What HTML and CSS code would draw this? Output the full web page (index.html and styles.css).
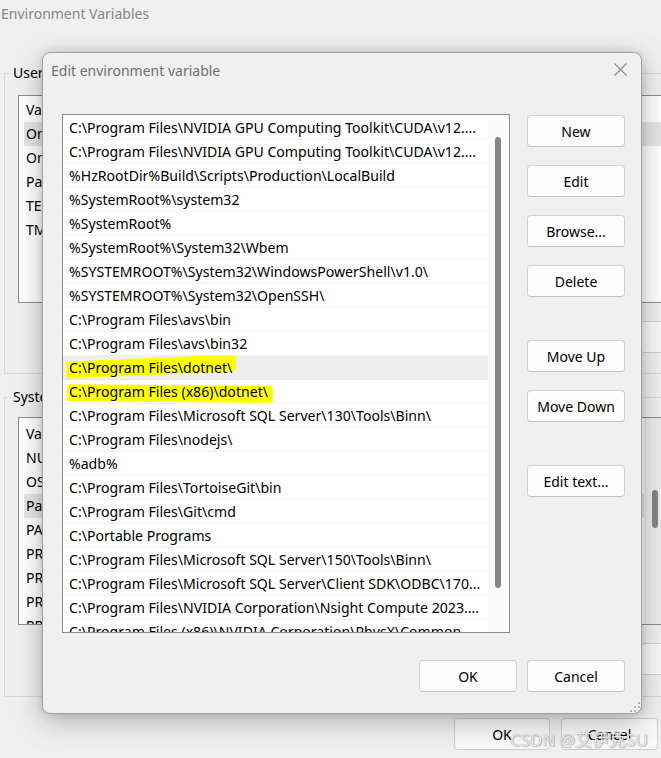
FILE: index.html
```html
<!DOCTYPE html>
<html lang="en">
<head>
<meta charset="utf-8">
<title>Edit environment variable</title>
<link rel="stylesheet" href="styles.css">
</head>
<body>
<div class="envwin">
  <div class="env-title">Environment Variables</div>
  <fieldset class="group group-user">
    <legend>User variables for user</legend>
    <div class="varlist varlist-user">
      <div class="vrow">Variable</div>
      <div class="vrow vsel">OneDrive</div>
      <div class="vrow">OneDriveConsumer</div>
      <div class="vrow">Path</div>
      <div class="vrow">TEMP</div>
      <div class="vrow">TMP</div>
    </div>
    <div class="group-buttons">
      <button class="btn-bg">New...</button>
      <button class="btn-bg">Edit...</button>
      <button class="btn-bg">Delete</button>
    </div>
  </fieldset>
  <fieldset class="group group-sys">
    <legend>System variables</legend>
    <div class="varlist varlist-sys">
      <div class="vrows">
        <div class="vrow">Variable</div>
        <div class="vrow">NUMBER_OF_PROCESSORS</div>
        <div class="vrow">OS</div>
        <div class="vrow vsel">Path</div>
        <div class="vrow">PATHEXT</div>
        <div class="vrow">PROCESSOR_ARCHITECTURE</div>
        <div class="vrow">PROCESSOR_IDENTIFIER</div>
        <div class="vrow">PROCESSOR_LEVEL</div>
        <div class="vrow">PROCESSOR_REVISION</div>
      </div>
      <div class="vscroll"><div class="vthumb"></div></div>
    </div>
    <div class="group-buttons">
      <button class="btn-bg">New...</button>
      <button class="btn-bg">Edit...</button>
      <button class="btn-bg">Delete</button>
    </div>
  </fieldset>
  <div class="env-footer">
    <button class="btn-bg btn-ok">OK</button>
    <button class="btn-bg btn-cancel">Cancel</button>
  </div>
</div>

<div class="dialog">
  <div class="dlg-titlebar">
    <div class="dlg-title">Edit environment variable</div>
    <div class="dlg-close">
      <svg width="13" height="13" viewBox="0 0 13 13"><path d="M0.5 0.5L12.5 12.5M12.5 0.5L0.5 12.5" stroke="#8a8a8a" stroke-width="1.1" fill="none"/></svg>
    </div>
  </div>
  <div class="dlg-body">
    <div class="pathlist">
      <div class="prows">
        <div class="prow">C:\Program Files\NVIDIA GPU Computing Toolkit\CUDA\v12....</div>
        <div class="prow">C:\Program Files\NVIDIA GPU Computing Toolkit\CUDA\v12....</div>
        <div class="prow">%HzRootDir%Build\Scripts\Production\LocalBuild</div>
        <div class="prow">%SystemRoot%\system32</div>
        <div class="prow">%SystemRoot%</div>
        <div class="prow">%SystemRoot%\System32\Wbem</div>
        <div class="prow">%SYSTEMROOT%\System32\WindowsPowerShell\v1.0\</div>
        <div class="prow">%SYSTEMROOT%\System32\OpenSSH\</div>
        <div class="prow">C:\Program Files\avs\bin</div>
        <div class="prow">C:\Program Files\avs\bin32</div>
        <div class="prow prow-sel"><span class="hl hl-a">C:\Program Files\dotnet\</span></div>
        <div class="prow"><span class="hl hl-b">C:\Program Files (x86)\dotnet\</span></div>
        <div class="prow">C:\Program Files\Microsoft SQL Server\130\Tools\Binn\</div>
        <div class="prow">C:\Program Files\nodejs\</div>
        <div class="prow">%adb%</div>
        <div class="prow">C:\Program Files\TortoiseGit\bin</div>
        <div class="prow">C:\Program Files\Git\cmd</div>
        <div class="prow">C:\Portable Programs</div>
        <div class="prow">C:\Program Files\Microsoft SQL Server\150\Tools\Binn\</div>
        <div class="prow">C:\Program Files\Microsoft SQL Server\Client SDK\ODBC\170...</div>
        <div class="prow">C:\Program Files\NVIDIA Corporation\Nsight Compute 2023....</div>
        <div class="prow">C:\Program Files (x86)\NVIDIA Corporation\PhysX\Common</div>
      </div>
      <div class="pscroll"><div class="pthumb"></div></div>
    </div>
    <div class="dlg-buttons">
      <div class="btn-group">
        <button class="btn">New</button>
        <button class="btn">Edit</button>
        <button class="btn">Browse...</button>
        <button class="btn">Delete</button>
      </div>
      <div class="btn-group">
        <button class="btn">Move Up</button>
        <button class="btn">Move Down</button>
      </div>
      <div class="btn-group">
        <button class="btn">Edit text...</button>
      </div>
    </div>
  </div>
  <div class="dlg-footer">
    <button class="btn">OK</button>
    <button class="btn">Cancel</button>
  </div>
  <svg class="grip" width="10" height="10" viewBox="0 0 10 10">
    <rect x="8" y="0" width="2" height="2" fill="#b4b4b4"/>
    <rect x="4" y="4" width="2" height="2" fill="#b4b4b4"/>
    <rect x="8" y="4" width="2" height="2" fill="#b4b4b4"/>
    <rect x="0" y="8" width="2" height="2" fill="#b4b4b4"/>
    <rect x="4" y="8" width="2" height="2" fill="#b4b4b4"/>
    <rect x="8" y="8" width="2" height="2" fill="#b4b4b4"/>
  </svg>
</div>

<div class="watermark">CSDN @艾伊克SU</div>
</body>
</html>
```

FILE: styles.css
```css
* { box-sizing: border-box; }
html, body { margin: 0; padding: 0; }
body {
  width: 661px;
  height: 758px;
  overflow: hidden;
  position: relative;
  background: #f0f0f0;
  font-family: "Noto Sans", "Open Sans", sans-serif;
  font-size: 14px;
  color: #000;
}

/* background window */
.envwin { width: 760px; }
.env-title {
  height: 24px;
  line-height: 20px;
  padding: 4px 0 0 1px;
  color: #858585;
}
.group {
  width: 756px;
  margin: 0 0 0 4px;
  border: 1px solid #d9d9d9;
  padding: 0 0 20px 13px;
  min-width: 0;
}
.group legend {
  padding: 0 2px;
  margin-left: -7px;
  line-height: 20px;
}
.group-user { margin-top: 39px; padding-top: 12px; }
.group-sys { margin-top: 13px; padding-top: 10px; padding-bottom: 21px; }
.varlist {
  height: 208px;
  border: 1px solid #8c8f95;
  background: #fff;
  overflow: hidden;
}
.varlist-user { padding: 2px 0 0 5px; }
.varlist-sys { width: 644px; display: flex; }
.vrows { flex: 1; padding: 4px 0 0 5px; overflow: hidden; }
.vscroll { width: 17px; background: #ececec; }
.vthumb {
  margin: 72px 0 0 8px;
  width: 6px;
  height: 38px;
  border-radius: 3px;
  background: #858585;
}
.vrow {
  height: 24px;
  line-height: 24px;
  padding-left: 2px;
  white-space: nowrap;
}
.vsel { background: #e5e5e5; }
.group-buttons {
  display: flex;
  gap: 10px;
  margin-top: 18px;
  padding-left: 410px;
}
.btn-bg {
  font: inherit;
  color: #000;
  width: 96px;
  height: 32px;
  padding: 0;
  border: 1px solid #cfcfcf;
  border-radius: 4px;
  background: #f9f9f9;
}
.env-footer {
  width: 661px;
  display: flex;
  justify-content: flex-end;
  gap: 11px;
  margin-top: 21px;
  padding-right: 3px;
}
.env-footer .btn-cancel { width: 97px; }

/* dialog */
.dialog {
  position: absolute;
  left: 42px;
  top: 52px;
  width: 600px;
  height: 662px;
  background: #f0f0f0;
  border: 1px solid #a3a3a3;
  border-radius: 8px;
  box-shadow: 0 8px 28px rgba(0, 0, 0, 0.26), 0 0 10px rgba(0, 0, 0, 0.12);
  display: flex;
  flex-direction: column;
}
.dlg-titlebar {
  height: 36px;
  display: flex;
  align-items: center;
  justify-content: space-between;
  padding-left: 8px;
}
.dlg-title { color: #6f6f6f; line-height: 20px; }
.dlg-close {
  width: 42px;
  height: 36px;
  display: flex;
  align-items: center;
  justify-content: center;
  padding-bottom: 3px;
}
.dlg-close svg { display: block; }
.dlg-body {
  display: flex;
  padding-left: 19px;
  margin-top: 25px;
}
.pathlist {
  width: 448px;
  height: 519px;
  border: 1px solid #8c8f95;
  background: #fff;
  display: flex;
  overflow: hidden;
}
.prows { width: 425px; padding-top: 1px; overflow: hidden; }
.prow {
  position: relative;
  z-index: 0;
  height: 24px;
  line-height: 24px;
  border-bottom: 1px solid #efefef;
  padding-left: 6px;
  font-size: 14.1px;
  white-space: nowrap;
  overflow: hidden;
}
.prow-sel { background: #efefef; border-bottom-color: #e8e8e8; }
.hl { position: relative; }
.hl::before {
  content: "";
  position: absolute;
  z-index: -1;
  background: #ffff00;
  border-radius: 3px;
}
.hl-a::before { left: -3px; right: -4px; top: 0; bottom: 2px; transform: rotate(-2.5deg); }
.hl-b::before { left: -2px; right: -5px; top: 3px; bottom: -1px; transform: rotate(0.5deg); }
.pscroll { flex: 1; background: #fbfbfb; }
.pthumb {
  margin: 22px 0 0 7px;
  width: 6px;
  height: 451px;
  border-radius: 3px;
  background: #868686;
}
.dlg-buttons {
  display: flex;
  flex-direction: column;
  gap: 43px;
  margin-left: 17px;
  padding-top: 1px;
}
.btn-group { display: flex; flex-direction: column; gap: 18px; }
.btn {
  font: inherit;
  color: #000;
  width: 98px;
  height: 32px;
  padding: 0;
  border: 1px solid #d2d2d2;
  border-bottom-color: #c2c2c2;
  border-radius: 4px;
  background: #fdfdfd;
}
.dlg-footer {
  display: flex;
  justify-content: flex-end;
  gap: 10px;
  padding-right: 16px;
  margin-top: 27px;
}
.grip { position: absolute; right: 1px; bottom: 1px; }

.watermark {
  position: absolute;
  left: 510px;
  top: 728px;
  white-space: nowrap;
  font-family: "Noto Sans", "Noto Sans CJK SC", sans-serif;
  font-size: 17px;
  line-height: 24px;
  color: rgba(255, 255, 255, 0.82);
  text-shadow: 0 0 1px rgba(110, 110, 110, 0.85), 1px 1px 1px rgba(0, 0, 0, 0.2);
}
```
